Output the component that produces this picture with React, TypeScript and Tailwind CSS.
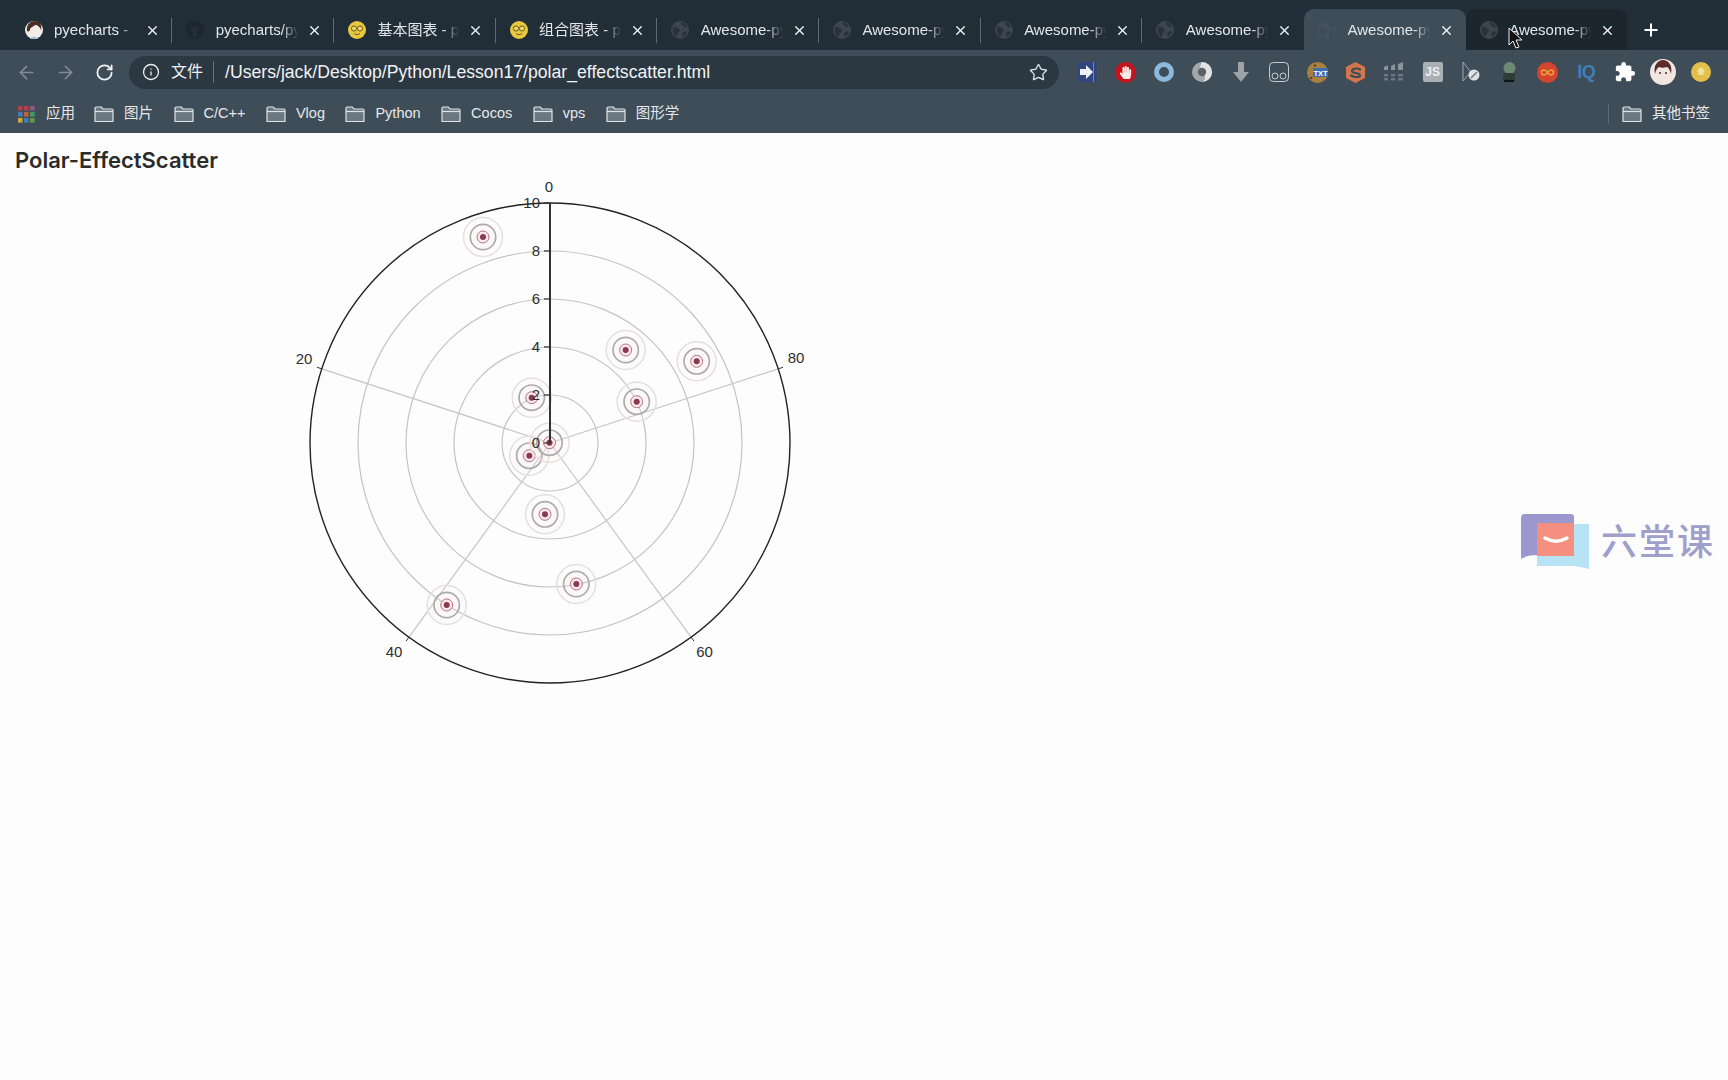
import React from "react";
import { ArrowLeft, ArrowRight, RotateCw, Info, Star, X, Plus } from "lucide-react";
import { MdExtension } from "react-icons/md";
import { FaHandPaper } from "react-icons/fa";

const Avatar = () => (
  <svg width="18" height="18" viewBox="0 0 18 18">
    <circle cx="9" cy="9" r="9" fill="#f1ece6" />
    <path d="M2 10C1 3 6 0 10 0c5 0 7 4 6 9-1-3-3-5-6-5-2 2-5 2-5 5 0 1-2 2-3 1Z" fill="#4a2c22" />
    <path d="M5 18c1-3 7-3 8 0Z" fill="#9fc0c8" />
  </svg>
);
const Github = () => (
  <svg width="18" height="18" viewBox="0 0 18 18">
    <circle cx="9" cy="9" r="9" fill="#1d262e" />
    <path d="M5 5l2 1h4l2-1v4c0 2-2 3-4 3s-4-1-4-3Z" fill="#222e38" />
    <path d="M7 12v4h4v-4Z" fill="#222e38" />
  </svg>
);
const Emoji = () => (
  <svg width="18" height="18" viewBox="0 0 18 18">
    <circle cx="9" cy="9" r="9" fill="#e7c83e" />
    <circle cx="6" cy="7.5" r="2.6" fill="#ecd868" stroke="#6d5a1c" strokeWidth="1" />
    <circle cx="12" cy="7.5" r="2.6" fill="#ecd868" stroke="#6d5a1c" strokeWidth="1" />
    <path d="M6 12.5c2 1.5 4 1.5 6 0" stroke="#6d5a1c" strokeWidth="1" fill="none" />
  </svg>
);
const Globe = ({ dim = false }: { dim?: boolean }) => (
  <svg width="18" height="18" viewBox="0 0 18 18">
    <circle cx="9" cy="9" r="9" fill={dim ? "#44525d" : "#3b4650"} />
    <path d="M2 6c3-1 4 1 6 2s0 3-1 4-1 4-2 4C3 14 1 10 2 6ZM10 1c2 0 5 2 6 5-2 1-3 0-4-1s-3-2-2-4ZM12 11c2-1 3-1 4 0-1 2-2 4-4 5-1-2-1-4 0-5Z" fill={dim ? "#3e4b56" : "#28323b"} />
  </svg>
);

const tabs: { title: string; icon: React.ReactNode; sep: boolean; state?: "active" | "hover" }[] = [
  { title: "pyecharts - ", icon: <Avatar />, sep: true },
  { title: "pyecharts/py", icon: <Github />, sep: true },
  { title: "基本图表 - py", icon: <Emoji />, sep: true },
  { title: "组合图表 - py", icon: <Emoji />, sep: true },
  { title: "Awesome-py", icon: <Globe />, sep: true },
  { title: "Awesome-py", icon: <Globe />, sep: true },
  { title: "Awesome-py", icon: <Globe />, sep: true },
  { title: "Awesome-py", icon: <Globe />, sep: false },
  { title: "Awesome-py", icon: <Globe dim />, sep: false, state: "active" },
  { title: "Awesome-py", icon: <Globe />, sep: false, state: "hover" },
];

const Tab = ({ t }: { t: (typeof tabs)[number] }) => (
  <div
    className={
      "flex h-[41px] w-[161.7px] shrink-0 items-center rounded-t-[10px] pl-[14px] pt-[1px] " +
      (t.state === "active" ? "bg-[#3f4d58]" : t.state === "hover" ? "bg-[#1c262f]" : "")
    }
  >
    <div className="h-[18px] w-[18px] shrink-0">{t.icon}</div>
    <div className="ml-[11.5px] w-[84px] shrink-0 overflow-hidden whitespace-pre text-[15px] text-[#e3e6e8] [mask-image:linear-gradient(to_right,black_78%,transparent_98%)]">
      {t.title}
    </div>
    <X size={15} strokeWidth={2.2} className="ml-[7px] shrink-0 text-[#f2f4f5]" />
    {t.sep && <div className="ml-auto h-[25px] w-px bg-[#5d6973]" />}
  </div>
);

const Folder = () => (
  <svg width="20" height="17" viewBox="0 0 20 17" className="shrink-0">
    <path d="M1 15.5V2.2C1 1.5 1.5 1 2.2 1h5l1.8 2h8.8c.7 0 1.2.5 1.2 1.2v11.3Z" fill="#6c7881" stroke="#dfe3e6" strokeWidth="1.2" />
    <path d="M1 5.5h18" stroke="#dfe3e6" strokeWidth="1.2" />
  </svg>
);

const AppsGrid = () => {
  const c = ["#b2404a", "#b2404a", "#8a5a8a", "#3f7cb5", "#c75f3a", "#3f9a6a", "#d2a63a", "#3f7cb5", "#5f9a4a"];
  return (
    <svg width="17" height="17" viewBox="0 0 17 17" className="shrink-0">
      {c.map((f, i) => (
        <rect key={i} x={(i % 3) * 6} y={Math.floor(i / 3) * 6} width="4.6" height="4.6" fill={f} />
      ))}
    </svg>
  );
};

const Ext = ({ children }: { children: React.ReactNode }) => (
  <div className="flex h-[38px] w-[38.4px] shrink-0 items-center justify-center">{children}</div>
);

const extensions = [
  <svg key="a" width="20" height="20" viewBox="0 0 20 20">
    <rect width="20" height="20" fill="#30467f" />
    <rect x="16" width="1" height="20" fill="#6f86b8" />
    <path d="M3 7h6V3l7 7-7 7v-4H3Z" fill="#eef1f7" />
  </svg>,
  <div key="b" className="flex h-[21px] w-[21px] items-center justify-center rounded-full bg-[#c2141d]">
    <FaHandPaper size={13} color="#f8e8e8" />
  </div>,
  <div key="c" className="h-[20px] w-[20px] rounded-full border-[5px] border-[#8cb9dc]" />,
  <svg key="d" width="20" height="20" viewBox="0 0 20 20">
    <circle cx="10" cy="10" r="10" fill="#a4a7aa" />
    <path d="M10 0a10 10 0 0 1 0 20c4-2 4-6 1-8-3-2-4-7-1-12Z" fill="#e2e3e4" />
    <circle cx="10" cy="10" r="4.2" fill="#59646d" />
  </svg>,
  <svg key="e" width="16" height="20" viewBox="0 0 16 20">
    <path d="M5 0h6v10h5l-8 10-8-10h5Z" fill="#9ea3a7" />
  </svg>,
  <svg key="f" width="20" height="20" viewBox="0 0 20 20" fill="none" stroke="#c6cbcf" strokeWidth="1">
    <rect x=".5" y=".5" width="19" height="19" rx="4" />
    <circle cx="6" cy="14" r="3" />
    <circle cx="14" cy="14" r="3" />
  </svg>,
  <svg key="g" width="21" height="21" viewBox="0 0 21 21">
    <circle cx="10.5" cy="10.5" r="10.5" fill="#a9803f" />
    <circle cx="8" cy="3.5" r="1.3" fill="#5f4a20" />
    <circle cx="4" cy="16" r="1.3" fill="#5f4a20" />
    <rect x="6" y="6" width="15" height="9" fill="#3d6db0" />
    <text x="13.5" y="13.5" textAnchor="middle" fontSize="7.5" fontWeight="700" fill="#fff" fontFamily="Liberation Sans">TXT</text>
  </svg>,
  <svg key="h" width="19" height="21" viewBox="0 0 19 21">
    <path d="M9.5 0 19 5v11l-9.500 5L0 16V5Z" fill="#d4764d" />
    <path d="M14 7.500C12 6 6 6 6 9s8 1 8 4.500c0 2-6 2-9 0" fill="none" stroke="#3f4d58" strokeWidth="2.200" strokeLinecap="round" />
  </svg>,
  <svg key="i" width="20" height="20" viewBox="0 0 20 20" fill="#8b9298">
    <path d="M0 5l4-2v5H0ZM7 4l4-2v6H7ZM14 2l5-2v8h-5Z" />
    <rect y="12" width="4" height="2.500" opacity=".6" />
    <rect x="7" y="12" width="4" height="2.500" opacity=".6" />
    <rect x="14" y="12" width="5" height="2.500" opacity=".6" />
    <rect y="16" width="4" height="2.500" opacity=".6" />
    <rect x="7" y="16" width="4" height="2.500" opacity=".6" />
    <rect x="14" y="16" width="5" height="2.500" opacity=".6" />
  </svg>,
  <div key="j" className="flex h-[20px] w-[20px] items-center justify-center rounded-[2px] bg-[#a9afb3] text-[12px] font-bold text-[#eef0f1] [font-family:'Liberation_Sans',sans-serif]">
    JS
  </div>,
  <svg key="k" width="20" height="22" viewBox="0 0 20 22" fill="none">
    <path d="M2 1v19l5-6 5 0Z" stroke="#9fa7ad" strokeWidth="1" />
    <circle cx="13" cy="14" r="5.500" fill="#dfe2e4" />
    <path d="M10 17l6-6" stroke="#6b7680" strokeWidth="1.500" />
  </svg>,
  <svg key="l" width="16" height="22" viewBox="0 0 16 22">
    <circle cx="8.500" cy="7" r="6" fill="#6e8a74" />
    <rect x="2" y="12" width="12" height="9" rx="2" fill="#2e3d38" />
    <rect x="3" y="19" width="10" height="2" fill="#0f1714" />
  </svg>,
  <svg key="m" width="21" height="21" viewBox="0 0 21 21">
    <circle cx="10.500" cy="10.500" r="10.500" fill="#d2452e" />
    <path d="M10.500 10.500c-1.500-2-2.500-2.500-3.500-2.500a2.500 2.500 0 0 0 0 5c1 0 2-.5 3.500-2.500s2.500-2.500 3.500-2.500a2.500 2.500 0 0 1 0 5c-1 0-2-.5-3.500-2.500Z" fill="none" stroke="#f0a53c" strokeWidth="1.500" />
  </svg>,
  <div key="n" className="text-[18px] font-bold leading-none tracking-[-0.5px] text-[#3f7fb8] [font-family:'Liberation_Sans',sans-serif]">IQ</div>,
  <MdExtension key="o" size={22} color="#ffffff" />,
  <svg key="p" width="26" height="26" viewBox="0 0 26 26">
    <circle cx="13" cy="13" r="13" fill="#f1e6e2" />
    <path d="M5 15C3 6 8 1 13 1s10 5 8 14c-1-4-2-6-4-7-3 1-6 1-8 0-2 1-3 3-4 7Z" fill="#5b2c2a" />
    <circle cx="10" cy="14" r="1" fill="#4a2c2a" />
    <circle cx="16" cy="14" r="1" fill="#4a2c2a" />
  </svg>,
  <svg key="q" width="20" height="20" viewBox="0 0 20 20">
    <circle cx="10" cy="10" r="10" fill="#e3c04a" />
    <path d="M10 5l4 4-1.500 1v3h-5v-3L6 9Z" fill="#f3e39a" />
  </svg>,
];

const CX = 550;
const CY = 270;
const R = 240;
const pts: [number, number][] = [
  [483, 237], [531.7, 397.7], [625.7, 350], [696.7, 361.3], [636.7, 401.7],
  [529.3, 455.7], [545, 514.3], [576.3, 584], [446.7, 605], [549.5, 442.7],
];

const Chart = () => {
  const font = "'Liberation Sans', sans-serif";
  const angles = [72, 144, 216, 288];
  return (
    <svg width="900" height="560" className="block">
      {[48, 96, 144, 192].map((r) => (
        <circle key={r} cx={CX} cy={CY} r={r} fill="none" stroke="#c4c4c4" strokeWidth="1.200" />
      ))}
      {angles.map((a) => {
        const s = Math.sin((a * Math.PI) / 180);
        const c = Math.cos((a * Math.PI) / 180);
        return (
          <g key={a}>
            <line x1={CX} y1={CY} x2={CX - R * s} y2={CY - R * c} stroke="#c6c6c6" strokeWidth="1.200" />
            <line x1={CX - R * s} y1={CY - R * c} x2={CX - (R + 5) * s} y2={CY - (R + 5) * c} stroke="#333" strokeWidth="1" />
          </g>
        );
      })}
      <circle cx={CX} cy={CY} r={R} fill="none" stroke="#222" strokeWidth="1.400" />
      {pts.map(([x, yy], i) => {
        const y = yy - 173;
        return (
          <g key={i}>
            <circle cx={x} cy={y} r="19.500" fill="#fbeff0" fillOpacity=".12" stroke="#e6dfdf" strokeWidth="1.500" />
            <circle cx={x} cy={y} r="12.700" fill="#f7e6e8" fillOpacity=".1" stroke="#aeaaab" strokeWidth="1.700" />
            <circle cx={x} cy={y} r="6" fill="#fbe8eb" stroke="#b0758a" strokeWidth="1" />
            <circle cx={x} cy={y} r="3" fill="#8a3a4e" />
          </g>
        );
      })}
      <line x1={CX} y1={CY} x2={CX} y2={CY - R} stroke="#333" strokeWidth="2" />
      {[0, 2, 4, 6, 8, 10].map((v) => {
        const y = CY - v * 24;
        return (
          <g key={v}>
            <line x1={CX - 6} y1={y} x2={CX} y2={y} stroke="#333" strokeWidth="1.200" />
            <text x={CX - 10} y={y + 4.5} textAnchor="end" fontSize="15" fill="#2f2f2f" fontFamily={font}>{v}</text>
          </g>
        );
      })}
      {[["0", 549, 14], ["20", 304, 186], ["40", 394, 479], ["60", 704.500, 479], ["80", 796, 185]].map(([t, x, y]) => (
        <text key={t as string} x={x as number} y={(y as number) + 4.5} textAnchor="middle" fontSize="15" fill="#2f2f2f" fontFamily={font}>{t}</text>
      ))}
    </svg>
  );
};

const Bookmark = ({ label, gap = "mr-[20.5px]" }: { label: string; gap?: string }) => (
  <div className={"flex items-center gap-[10px] " + gap}>
    <Folder />
    <span className="text-[14.5px] text-[#e6e9eb]">{label}</span>
  </div>
);

export default function App() {
  return (
    <div className="flex h-[1080px] w-[1728px] flex-col overflow-hidden bg-[#fdfdfd] [font-family:'Liberation_Sans','Noto_Sans_CJK_SC',sans-serif]">
      {/* tab strip */}
      <div className="flex h-[50px] shrink-0 items-end bg-[#212d37] pl-[10.5px]">
        {tabs.map((t, i) => (
          <Tab key={i} t={t} />
        ))}
        <Plus size={20} strokeWidth={2.4} className="mb-[10px] ml-[14px] text-white" />
      </div>

      {/* toolbar */}
      <div className="flex h-[50px] shrink-0 items-center bg-[#3f4d58] pb-[6px] pl-[6.5px]">
        <div className="flex w-[39px] justify-center text-[#808b94]"><ArrowLeft size={21} strokeWidth={1.8} /></div>
        <div className="flex w-[39px] justify-center text-[#808b94]"><ArrowRight size={21} strokeWidth={1.8} /></div>
        <div className="flex w-[39px] justify-center text-[#f0f2f3]"><RotateCw size={19} strokeWidth={2.2} /></div>
        <div className="ml-[5.5px] flex h-[33px] w-[930px] shrink-0 items-center rounded-full bg-[#2b3741] pl-[13px] pr-[11px]">
          <Info size={18} strokeWidth={1.7} className="shrink-0 text-[#eceff1]" />
          <span className="ml-[11px] text-[16px] text-[#eceff1]">文件</span>
          <div className="ml-[10px] h-[22px] w-px bg-[#69747d]" />
          <span className="ml-[11px] text-[17.65px] text-[#f0f2f3]">/Users/jack/Desktop/Python/Lesson17/polar_effectscatter.html</span>
          <Star size={19} strokeWidth={1.7} className="ml-auto text-[#dfe3e6]" />
        </div>
        <div className="ml-[9px] flex items-center">{extensions.map((e, i) => <Ext key={i}>{e}</Ext>)}</div>
      </div>

      {/* bookmarks */}
      <div className="flex h-[33px] shrink-0 items-center bg-[#3f4d58] pb-[5px] pl-[18px]">
        <div className="mr-[19px] flex items-center gap-[11px]">
          <AppsGrid />
          <span className="text-[14.5px] text-[#e6e9eb]">应用</span>
        </div>
        <Bookmark label="图片" />
        <Bookmark label="C/C++" />
        <Bookmark label="Vlog" />
        <Bookmark label="Python" />
        <Bookmark label="Cocos" />
        <Bookmark label="vps" />
        <Bookmark label="图形学" gap="" />
        <div className="ml-auto mr-[18px] flex items-center">
          <div className="mr-[13px] h-[20px] w-px bg-[#5d6973]" />
          <Bookmark label="其他书签" gap="" />
        </div>
      </div>

      {/* page */}
      <div className="relative flex-1">
        <div className="h-[40px] pl-[15px] pt-[13px] text-[22px] font-semibold leading-[28px] text-[#2b2b2b] [font-family:Inter,sans-serif]">
          Polar-EffectScatter
        </div>
        <Chart />

        {/* watermark */}
        <div className="absolute left-[1521px] top-[381px] flex items-start">
          <svg width="68" height="57" viewBox="0 0 68 57">
            <path d="M16 10h52v45l-14-3H16Z" fill="#b8e3f4" />
            <path d="M4 0h46a3 3 0 0 1 3 3v38H16c-6 0-11 1-16 4V4a4 4 0 0 1 4-4Z" fill="#9c98cf" />
            <rect x="16" y="9" width="37" height="33" fill="#f58f7f" />
            <path d="M24 24c7 4 15 4 22 0" fill="none" stroke="#fff" strokeWidth="3.500" strokeLinecap="round" />
          </svg>
          <div className="ml-[12px] mt-[7px] text-[36px] font-medium leading-none tracking-[2px] text-[#a09fcb] [font-family:'Noto_Sans_CJK_SC',sans-serif]">六堂课</div>
        </div>
      </div>

      {/* mouse cursor over the tab */}
      <svg width="16" height="24" viewBox="0 0 16 24" className="absolute left-[1508px] top-[27px]">
        <path d="M1 1v17l4-4 3 7 3-1-3-7h6Z" fill="#111" stroke="#eee" strokeWidth="1" />
      </svg>
    </div>
  );
}
